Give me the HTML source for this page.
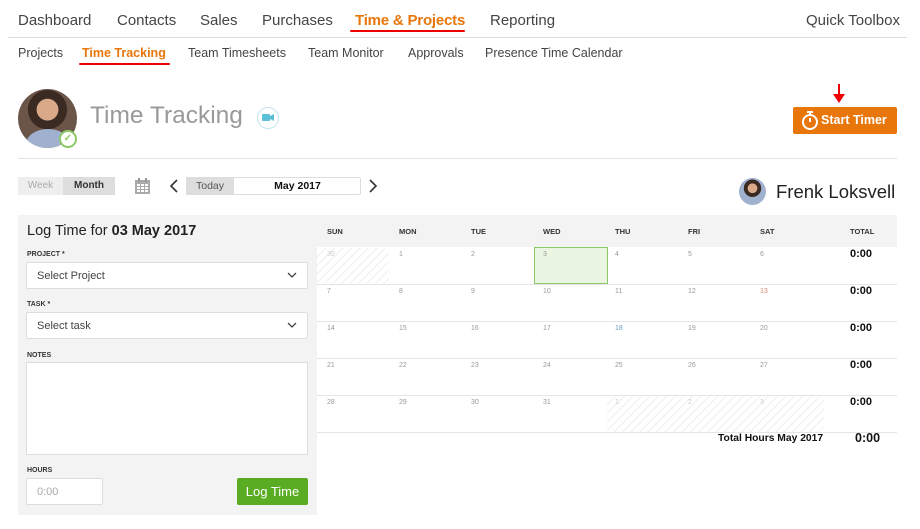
<!DOCTYPE html>
<html><head><meta charset="utf-8"><style>
*{margin:0;padding:0;box-sizing:border-box}
body{width:920px;height:529px;background:#fff;font-family:"Liberation Sans",sans-serif;position:relative;overflow:hidden;color:#333}
.a{position:absolute;white-space:nowrap}
.nav{font-size:15px;color:#444;top:12px}
.sub{font-size:12.5px;color:#444;top:46px}
.or{color:#e8760a;font-weight:bold}
.hd{font-size:7.5px;font-weight:bold;color:#333;top:227px}
.n{font-size:7px;color:#999}
.tot{font-size:11px;font-weight:bold;color:#111}
.hatch{background:repeating-linear-gradient(135deg,#f0f0f0 0 1px,#fff 1px 6px)}
.sel{background:#fff;border:1px solid #ddd;border-radius:2px;font-size:11px;color:#444;padding-left:10px}
.lbl{font-size:7px;font-weight:bold;color:#333}
</style></head><body>
<div class="a nav" style="left:18px">Dashboard</div>
<div class="a nav" style="left:117px">Contacts</div>
<div class="a nav" style="left:200px">Sales</div>
<div class="a nav" style="left:262px">Purchases</div>
<div class="a nav or" style="left:355px;letter-spacing:-0.2px">Time &amp; Projects</div>
<div class="a nav" style="left:490px">Reporting</div>
<div class="a nav" style="left:806px">Quick Toolbox</div>
<div class="a" style="left:350px;top:30px;width:115px;height:2px;background:#e00;border-radius:1px"></div>
<div class="a" style="left:8px;top:37px;width:899px;height:1px;background:#ddd"></div>
<div class="a sub" style="left:18px">Projects</div>
<div class="a sub or" style="left:82px">Time Tracking</div>
<div class="a sub" style="left:188px">Team Timesheets</div>
<div class="a sub" style="left:308px">Team Monitor</div>
<div class="a sub" style="left:408px">Approvals</div>
<div class="a sub" style="left:485px">Presence Time Calendar</div>
<div class="a" style="left:79px;top:63px;width:91px;height:2px;background:#e00;border-radius:1px"></div>

<div class="a" style="left:18px;top:89px;width:59px;height:59px;border-radius:50%;background:radial-gradient(circle at 50% 35%,#d9a98a 0 22%,#3a2a22 23% 40%,#6b5448 41%);overflow:hidden"><div style="position:absolute;left:8px;top:40px;width:44px;height:30px;border-radius:50% 50% 0 0;background:#9fb1cf"></div></div>
<div class="a" style="left:59px;top:130px;width:18px;height:18px;border-radius:50%;background:#fff;border:2px solid #8cc866;color:#8cc866;font-size:10px;text-align:center;line-height:14px;font-weight:bold">✓</div>
<div class="a" style="left:90px;top:102px;font-size:24.5px;color:#999">Time Tracking</div>
<div class="a" style="left:257px;top:107px;width:22px;height:22px;border-radius:50%;border:1.5px solid #bfe2ea"><svg width="19" height="19" viewBox="0 0 19 19" style="position:absolute;left:0;top:0"><rect x="4" y="6" width="8" height="7" rx="1" fill="#5bc0d6"/><path d="M12 8l4-2v7l-4-2z" fill="#5bc0d6"/></svg></div>
<svg class="a" style="left:832px;top:84px" width="14" height="20"><path d="M7 0v12" stroke="#e00" stroke-width="2"/><path d="M1 10h12l-6 9z" fill="#e00"/></svg>
<div class="a" style="left:793px;top:107px;width:104px;height:27px;background:#e8760a;border-radius:2px;color:#fff;font-weight:bold;font-size:12.5px;line-height:27px;padding-left:28px">Start Timer</div>
<svg class="a" style="left:800px;top:110px" width="20" height="21"><circle cx="10" cy="12" r="7" fill="none" stroke="#fff" stroke-width="2"/><path d="M7 2h6M10 2v3M10 12V8" stroke="#fff" stroke-width="2"/></svg>
<div class="a" style="left:18px;top:158px;width:879px;height:1px;background:#e3e3e3"></div>

<div class="a" style="left:18px;top:177px;width:45px;height:18px;background:#eee;font-size:10px;color:#aaa;text-align:center;line-height:18px">Week</div>
<div class="a" style="left:63px;top:177px;width:52px;height:18px;background:#ddd;font-size:10px;color:#333;font-weight:bold;text-align:center;line-height:18px">Month</div>
<svg class="a" style="left:134px;top:177px" width="17" height="18"><rect x="1" y="3" width="15" height="14" fill="#aaa"/><g fill="#fff"><rect x="3" y="7" width="3" height="2"/><rect x="7" y="7" width="3" height="2"/><rect x="11" y="7" width="3" height="2"/><rect x="3" y="10" width="3" height="2"/><rect x="7" y="10" width="3" height="2"/><rect x="11" y="10" width="3" height="2"/><rect x="3" y="13" width="3" height="2"/><rect x="7" y="13" width="3" height="2"/><rect x="11" y="13" width="3" height="2"/></g><rect x="4" y="1" width="2" height="4" fill="#999"/><rect x="11" y="1" width="2" height="4" fill="#999"/></svg>
<svg class="a" style="left:168px;top:178px" width="12" height="16"><path d="M9 2L3 8l6 6" stroke="#333" stroke-width="1.6" fill="none"/></svg>
<div class="a" style="left:186px;top:177px;width:175px;height:18px;border:1px solid #ddd;border-radius:2px;background:#fff"></div>
<div class="a" style="left:186px;top:177px;width:48px;height:18px;background:#ddd;font-size:10.5px;color:#555;text-align:center;line-height:18px">Today</div>
<div class="a" style="left:234px;top:177px;width:127px;font-size:10.5px;font-weight:bold;text-align:center;line-height:18px;color:#111">May 2017</div>
<svg class="a" style="left:367px;top:178px" width="12" height="16"><path d="M3 2l6 6-6 6" stroke="#333" stroke-width="1.6" fill="none"/></svg>
<div class="a" style="left:739px;top:178px;width:27px;height:27px;border-radius:50%;background:radial-gradient(circle at 50% 38%,#d9a98a 0 22%,#3a2a22 23% 40%,#9fb1cf 41%)"></div>
<div class="a" style="left:776px;top:181px;font-size:18.5px;color:#222">Frenk Loksvell</div>

<div class="a" style="left:18px;top:215px;width:299px;height:300px;background:#f3f3f3"></div>
<div class="a" style="left:27px;top:223px;font-size:14.5px;color:#222">Log Time for <b>03 May 2017</b></div>
<div class="a lbl" style="left:27px;top:251px">PROJECT *</div>
<div class="a sel" style="left:26px;top:262px;width:282px;height:27px;line-height:27px">Select Project</div>
<div class="a lbl" style="left:27px;top:301px">TASK *</div>
<div class="a sel" style="left:26px;top:312px;width:282px;height:27px;line-height:27px">Select task</div>
<svg class="a" style="left:287px;top:271px" width="10" height="8"><path d="M1 2l4 4 4-4" stroke="#444" stroke-width="1.3" fill="none"/></svg>
<svg class="a" style="left:287px;top:321px" width="10" height="8"><path d="M1 2l4 4 4-4" stroke="#444" stroke-width="1.3" fill="none"/></svg>
<div class="a lbl" style="left:27px;top:352px">NOTES</div>
<div class="a" style="left:26px;top:362px;width:282px;height:93px;background:#fff;border:1px solid #ddd"></div>
<div class="a lbl" style="left:27px;top:467px">HOURS</div>
<div class="a sel" style="left:26px;top:478px;width:77px;height:27px;line-height:27px;color:#aaa">0:00</div>
<div class="a" style="left:237px;top:478px;width:71px;height:27px;background:#5aad22;border-radius:2px;color:#fff;font-size:13px;text-align:center;line-height:27px">Log Time</div>

<div class="a" style="left:317px;top:215px;width:580px;height:32px;background:#f3f3f3"></div>
<div class="a hd" style="left:327px">SUN</div><div class="a hd" style="left:399px">MON</div><div class="a hd" style="left:471px">TUE</div><div class="a hd" style="left:543px">WED</div><div class="a hd" style="left:615px">THU</div><div class="a hd" style="left:688px">FRI</div><div class="a hd" style="left:760px">SAT</div><div class="a hd" style="left:850px">TOTAL</div>
<div class="a hatch" style="left:317px;top:248px;width:72px;height:36px"></div>
<div class="a hatch" style="left:607px;top:396px;width:217px;height:36px"></div>
<div class="a" style="left:534px;top:247px;width:74px;height:37px;background:#eaf5e2;border:1px solid #8cc866"></div>
<div class="a" style="left:317px;top:284px;width:580px;height:1px;background:#e5e5e5"></div>
<div class="a" style="left:317px;top:321px;width:580px;height:1px;background:#e5e5e5"></div>
<div class="a" style="left:317px;top:358px;width:580px;height:1px;background:#e5e5e5"></div>
<div class="a" style="left:317px;top:395px;width:580px;height:1px;background:#e5e5e5"></div>
<div class="a" style="left:317px;top:432px;width:580px;height:1px;background:#e5e5e5"></div>

<div class="a n" style="left:327px;top:251px;color:#ccc">30</div><div class="a n" style="left:399px;top:251px">1</div><div class="a n" style="left:471px;top:251px">2</div><div class="a n" style="left:543px;top:251px">3</div><div class="a n" style="left:615px;top:251px">4</div><div class="a n" style="left:688px;top:251px">5</div><div class="a n" style="left:760px;top:251px">6</div>
<div class="a n" style="left:327px;top:288px">7</div><div class="a n" style="left:399px;top:288px">8</div><div class="a n" style="left:471px;top:288px">9</div><div class="a n" style="left:543px;top:288px">10</div><div class="a n" style="left:615px;top:288px">11</div><div class="a n" style="left:688px;top:288px">12</div><div class="a n" style="left:760px;top:288px;color:#d9866a">13</div>
<div class="a n" style="left:327px;top:325px">14</div><div class="a n" style="left:399px;top:325px">15</div><div class="a n" style="left:471px;top:325px">16</div><div class="a n" style="left:543px;top:325px">17</div><div class="a n" style="left:615px;top:325px;color:#6a9fc0">18</div><div class="a n" style="left:688px;top:325px">19</div><div class="a n" style="left:760px;top:325px">20</div>
<div class="a n" style="left:327px;top:362px">21</div><div class="a n" style="left:399px;top:362px">22</div><div class="a n" style="left:471px;top:362px">23</div><div class="a n" style="left:543px;top:362px">24</div><div class="a n" style="left:615px;top:362px">25</div><div class="a n" style="left:688px;top:362px">26</div><div class="a n" style="left:760px;top:362px">27</div>
<div class="a n" style="left:327px;top:399px">28</div><div class="a n" style="left:399px;top:399px">29</div><div class="a n" style="left:471px;top:399px">30</div><div class="a n" style="left:543px;top:399px">31</div><div class="a n" style="left:615px;top:399px;color:#ccc">1</div><div class="a n" style="left:688px;top:399px;color:#ccc">2</div><div class="a n" style="left:760px;top:399px;color:#ccc">3</div>
<div class="a tot" style="left:850px;top:248px">0:00</div>
<div class="a tot" style="left:850px;top:285px">0:00</div>
<div class="a tot" style="left:850px;top:322px">0:00</div>
<div class="a tot" style="left:850px;top:359px">0:00</div>
<div class="a tot" style="left:850px;top:396px">0:00</div>
<div class="a" style="left:718px;top:433px;font-size:10.3px;font-weight:bold;color:#111">Total Hours May 2017</div>
<div class="a" style="left:855px;top:431px;font-size:12.5px;font-weight:bold;color:#111">0:00</div>
</body></html>
